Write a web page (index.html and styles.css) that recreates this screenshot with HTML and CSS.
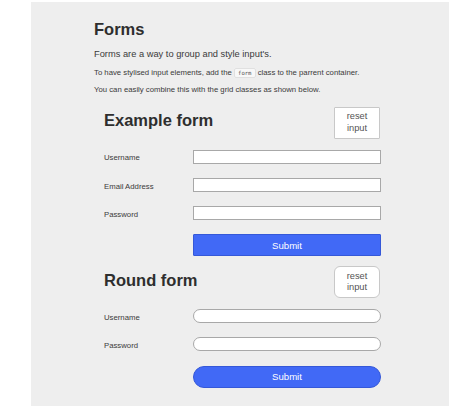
FILE: index.html
```html
<!DOCTYPE html>
<html>
<head>
<meta charset="utf-8">
<link rel="stylesheet" href="styles.css">
</head>
<body>
<main class="panel">
  <h1 class="title">Forms</h1>
  <p class="lead">Forms are a way to group and style input's.</p>
  <p class="small first">To have stylised input elements, add the <code class="code">form</code> class to the parrent container.</p>
  <p class="small second">You can easily combine this with the grid classes as shown below.</p>

  <form class="form">
    <div class="form-head">
      <h2 class="form-title">Example form</h2>
      <button type="button" class="reset">reset<br>input</button>
    </div>
    <div class="rows">
      <label class="label">Username</label><input class="input" type="text">
      <label class="label">Email Address</label><input class="input" type="text">
      <label class="label">Password</label><input class="input" type="password">
      <span></span><button type="button" class="submit">Submit</button>
    </div>
  </form>

  <form class="form round">
    <div class="form-head">
      <h2 class="form-title">Round form</h2>
      <button type="button" class="reset">reset<br>input</button>
    </div>
    <div class="rows">
      <label class="label">Username</label><input class="input" type="text">
      <label class="label">Password</label><input class="input" type="password">
      <span></span><button type="button" class="submit">Submit</button>
    </div>
  </form>
</main>
</body>
</html>
```
FILE: styles.css
```css
html, body {
  margin: 0;
  padding: 0;
  background: #ffffff;
}
body {
  font-family: "Liberation Sans", Arial, sans-serif;
  color: #3a3a3a;
}
.panel {
  margin: 2px 0 0 31px;
  width: 418px;
  height: 404px;
  box-sizing: border-box;
  background: #eeeeee;
  padding: 17px 68px 0 63px;
}
.title {
  margin: 0;
  font-size: 16.5px;
  line-height: 20px;
  font-weight: bold;
  color: #2e2e2e;
}
.lead {
  margin: 9px 0 0;
  font-size: 9.3px;
  line-height: 12px;
  color: #3a3a3a;
}
.small {
  margin: 0;
  font-size: 7.75px;
  line-height: 12px;
  color: #3a3a3a;
}
.first { margin-top: 6.7px; }
.second { margin-top: 5px; }
.code {
  font-family: "DejaVu Sans Mono", monospace;
  font-size: 5.6px;
  background: #f8f8f8;
  border: 1px solid #e0e0e0;
  border-radius: 2px;
  padding: 1px 3px;
  color: #555;
}
.form {
  margin: 0 0 0 10px;
  width: 277px;
}
.form-head {
  display: flex;
  justify-content: space-between;
  align-items: flex-start;
  margin-top: 11px;
}
.round .form-head { margin-top: 10px; }
.form-title {
  margin: 3.5px 0 0;
  font-size: 16.5px;
  line-height: 20px;
  font-weight: bold;
  color: #2e2e2e;
}
.reset {
  width: 46px;
  height: 32px;
  box-sizing: border-box;
  background: #fff;
  border: 1px solid #c8c8c8;
  border-radius: 1px;
  font-family: "Liberation Sans", Arial, sans-serif;
  font-size: 9.3px;
  line-height: 11.5px;
  color: #555;
  padding: 0;
  margin-right: 1px;
}
.round .reset { border-radius: 6px; }
.rows {
  display: grid;
  grid-template-columns: 89px 188px;
  row-gap: 14.2px;
  align-items: center;
  margin-top: 11px;
}
.label {
  font-size: 7.75px;
  line-height: 14px;
  margin: 1.8px 0 -1.8px;
  color: #3a3a3a;
}
.input {
  height: 14px;
  box-sizing: border-box;
  margin: 0;
  border: 1px solid #a8a8a8;
  background: #fff;
  border-radius: 0;
  padding: 0;
}
.round .input {
  border-radius: 7px;
  border-width: 1.3px;
}
.submit {
  height: 22px;
  box-sizing: border-box;
  margin: 0;
  background: #4169f6;
  border: 1px solid #3558d8;
  border-radius: 1px;
  color: #fff;
  font-family: "Liberation Sans", Arial, sans-serif;
  font-size: 9.6px;
}
.round .submit {
  border-radius: 11px;
}
```
